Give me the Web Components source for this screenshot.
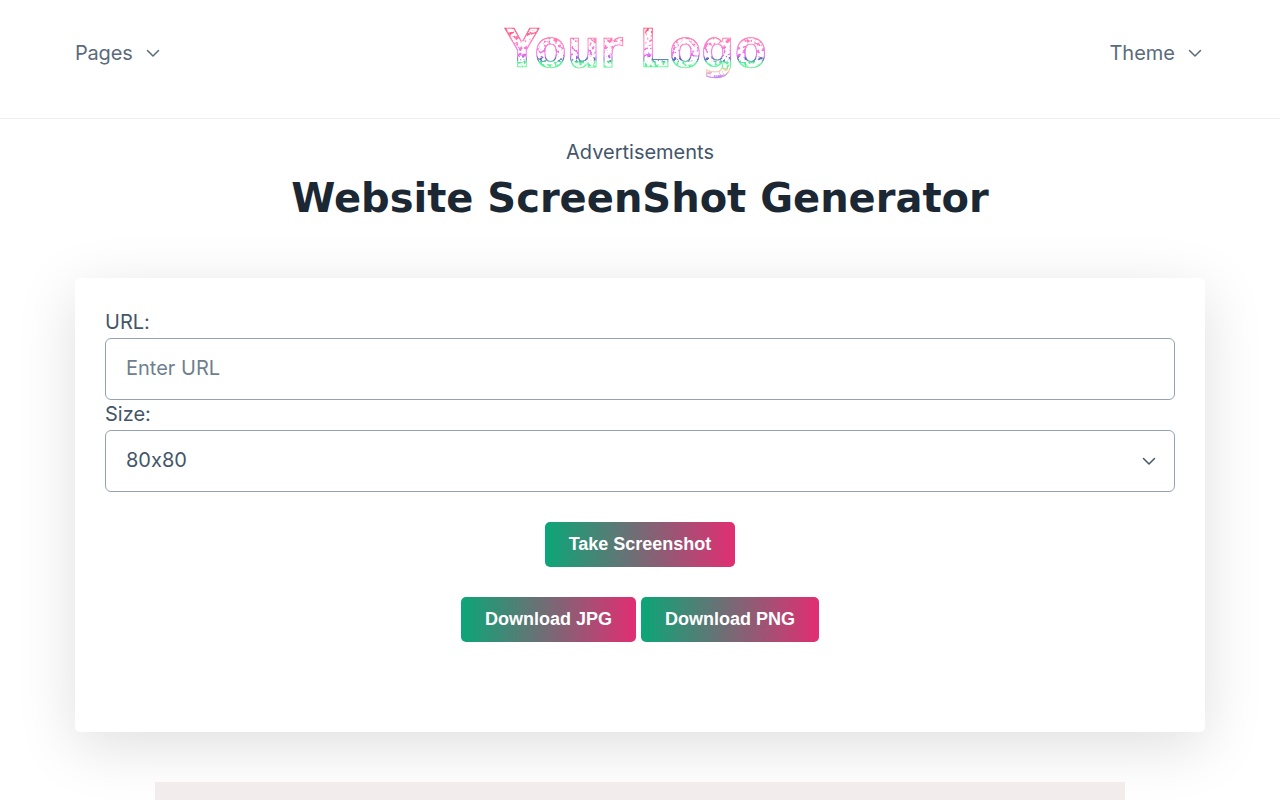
<!DOCTYPE html>
<html>
<head>
<meta charset="utf-8">
<title>Website ScreenShot Generator</title>
<style>
  html, body { margin: 0; background: #fff; }
  body { font-family: Inter, "Noto Sans", sans-serif; font-feature-settings: "calt" 0; color: #43566a; }
</style>
</head>
<body>
<template id="chevron-tpl">
  <style>
    :host { display: inline-flex; width: 16px; height: 16px; }
    svg { width: 16px; height: 16px; display: block; }
  </style>
  <svg viewBox="0 0 16 16" fill="none" stroke="currentColor" stroke-width="1.5" stroke-linecap="round" stroke-linejoin="round"><path d="M2.500 5.500 8 11l5.500-5.500"/></svg>
</template>

<site-header></site-header>
<site-intro></site-intro>
<shot-card></shot-card>
<ad-block></ad-block>

<script>
class ChevronIcon extends HTMLElement {
  constructor() {
    super();
    this.attachShadow({ mode: "open" });
    this.shadowRoot.appendChild(document.getElementById("chevron-tpl").content.cloneNode(true));
  }
}
customElements.define("chevron-icon", ChevronIcon);

class NavMenu extends HTMLElement {
  constructor() {
    super();
    this.attachShadow({ mode: "open" });
    this.shadowRoot.innerHTML = `
      <style>
        :host { display: inline-flex; align-items: center; gap: 12px; padding-right: 2px; font-size: 20px; color: #5a6b7c; }
      </style>
      <slot></slot>
      <chevron-icon></chevron-icon>
    `;
  }
}
customElements.define("nav-menu", NavMenu);

class SiteLogo extends HTMLElement {
  constructor() {
    super();
    this.attachShadow({ mode: "open" });
    this.shadowRoot.innerHTML = `
      <style>
        :host { display: block; width: 270px; height: 70px; }
        svg { display: block; overflow: visible; }
        text { font-family: "DejaVu Sans", sans-serif; font-size: 54px; font-weight: 700; }
      </style>
      <svg width="270" height="70" viewBox="0 0 270 70">
        <defs>
          <linearGradient id="fill" gradientUnits="userSpaceOnUse" x1="0" y1="9" x2="0" y2="60">
            <stop offset="0" stop-color="#ff4f74"/>
            <stop offset=".33" stop-color="#ff86c8"/>
            <stop offset=".56" stop-color="#e56cf0"/>
            <stop offset=".63" stop-color="#4f66b4"/>
            <stop offset=".7" stop-color="#52f59a"/>
            <stop offset=".78" stop-color="#52f59a"/>
            <stop offset=".84" stop-color="#ffd6a8"/>
            <stop offset="1" stop-color="#c07cff"/>
          </linearGradient>
          <filter id="speckle" x="-5%" y="-10%" width="110%" height="120%">
            <feMorphology in="SourceAlpha" operator="erode" radius="1.3" result="inner"/>
            <feTurbulence type="fractalNoise" baseFrequency=".28" numOctaves="2" seed="7" result="n"/>
            <feColorMatrix in="n" type="matrix" values="0 0 0 0 1  0 0 0 0 1  0 0 0 0 1  0 0 0 7 -2.5" result="spots"/>
            <feComposite in="spots" in2="inner" operator="in" result="white"/>
            <feMerge><feMergeNode in="SourceGraphic"/><feMergeNode in="white"/></feMerge>
          </filter>
        </defs>
        <text x="4" y="49" textLength="262" lengthAdjust="spacingAndGlyphs"
          fill="url(#fill)" stroke="url(#fill)" stroke-width=".6" filter="url(#speckle)">Your Logo</text>
      </svg>
    `;
  }
}
customElements.define("site-logo", SiteLogo);

class SiteHeader extends HTMLElement {
  constructor() {
    super();
    this.attachShadow({ mode: "open" });
    this.shadowRoot.innerHTML = `
      <style>
        :host {
          display: flex; align-items: center; justify-content: space-between;
          height: 118px; padding: 0 75px; border-bottom: 1px solid #eceef0;
        }
        .in { display: flex; flex: 1; align-items: center; justify-content: space-between; padding-bottom: 12px; }
        .tight { letter-spacing: -.2px; }
      </style>
      <div class="in">
        <nav-menu class="tight">Pages</nav-menu>
        <site-logo></site-logo>
        <nav-menu>Theme</nav-menu>
      </div>
    `;
  }
}
customElements.define("site-header", SiteHeader);

class SiteIntro extends HTMLElement {
  constructor() {
    super();
    this.attachShadow({ mode: "open" });
    this.shadowRoot.innerHTML = `
      <style>
        :host { display: block; text-align: center; height: 159px; padding-top: 17px; box-sizing: border-box; }
        .ad { font-size: 20px; line-height: 32px; color: #43566a; }
        h1 {
          margin: 0; font-family: "DejaVu Sans", sans-serif; font-weight: 700;
          font-size: 40px; line-height: 60px; color: #1b2733;
        }
      </style>
      <div class="ad">Advertisements</div>
      <h1>Website ScreenShot Generator</h1>
    `;
  }
}
customElements.define("site-intro", SiteIntro);

class FormField extends HTMLElement {
  constructor() {
    super();
    this.attachShadow({ mode: "open" });
    this.shadowRoot.innerHTML = `
      <style>
        :host { display: block; }
        label { display: block; font-size: 20px; line-height: 28px; padding-bottom: 2px; color: #43566a; }
        .box {
          display: flex; align-items: center; justify-content: space-between;
          height: 62px; box-sizing: border-box; padding: 0 17px 2px 20px;
          border: 1px solid #94a3b3; border-radius: 6px; font-size: 20px; background: #fff;
        }
        .placeholder { color: #6f7f8e; }
        .value { color: #43566a; }
        chevron-icon { color: #43566a; margin-top: 2px; }
      </style>
      <label>${this.getAttribute("label")}</label>
      <div class="box">
        <span class="${this.hasAttribute("select") ? "value" : "placeholder"}">${this.getAttribute("text")}</span>
        ${this.hasAttribute("select") ? "<chevron-icon></chevron-icon>" : ""}
      </div>
    `;
  }
}
customElements.define("form-field", FormField);

class GradButton extends HTMLElement {
  constructor() {
    super();
    this.attachShadow({ mode: "open" });
    this.shadowRoot.innerHTML = `
      <style>
        :host {
          display: inline-block; height: 45px; box-sizing: border-box; padding: 0 24px;
          border-radius: 5px; background: linear-gradient(90deg, #0ba678, #e12e72);
          color: #fff; font-family: "Liberation Sans", Arial, sans-serif; font-weight: 700;
          font-size: 18px; line-height: 45px; white-space: nowrap;
        }
      </style>
      <slot></slot>
    `;
  }
}
customElements.define("grad-button", GradButton);

class ShotCard extends HTMLElement {
  constructor() {
    super();
    this.attachShadow({ mode: "open" });
    this.shadowRoot.innerHTML = `
      <style>
        :host {
          display: block; margin: 0 75px; height: 454px; box-sizing: border-box; padding: 30px;
          background: #fff; border-radius: 5px; box-shadow: 0 14px 60px rgba(0, 0, 0, .13);
        }
        .row { display: flex; justify-content: center; gap: 5px; margin-top: 30px; }
      </style>
      <form-field label="URL:" text="Enter URL"></form-field>
      <form-field label="Size:" text="80x80" select></form-field>
      <div class="row"><grad-button>Take Screenshot</grad-button></div>
      <div class="row"><grad-button>Download JPG</grad-button><grad-button>Download PNG</grad-button></div>
    `;
  }
}
customElements.define("shot-card", ShotCard);

class AdBlock extends HTMLElement {
  constructor() {
    super();
    this.attachShadow({ mode: "open" });
    this.shadowRoot.innerHTML = `
      <style>
        :host { display: block; width: 970px; height: 250px; margin: 50px auto 0; background: #f3ecec; }
      </style>
    `;
  }
}
customElements.define("ad-block", AdBlock);
</script>
</body>
</html>
